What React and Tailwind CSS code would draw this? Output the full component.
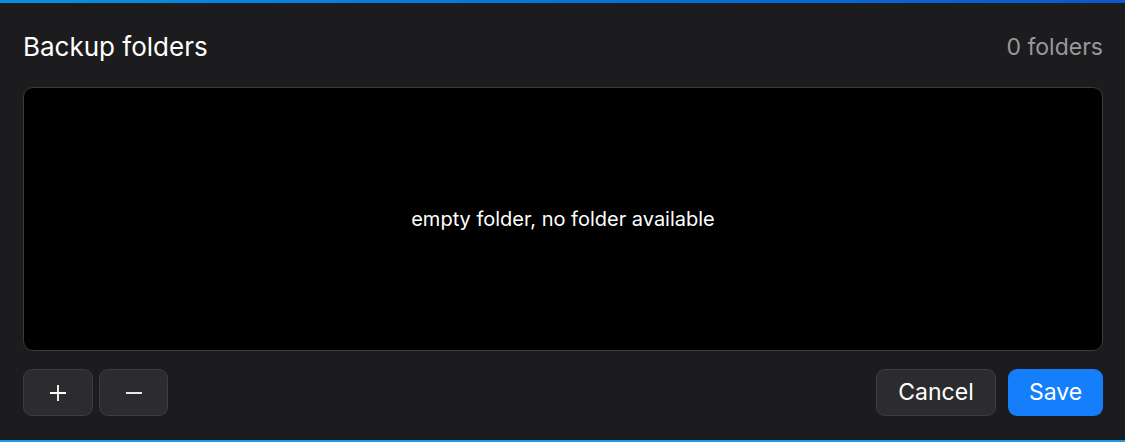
export default function App() {
  return (
    <div
      className="w-[1125px] h-[442px] bg-[#1c1c1e] flex flex-col text-white overflow-hidden"
      style={{ fontFamily: 'Inter, "Noto Sans", sans-serif' }}
    >
      <div className="h-[3px] bg-gradient-to-r from-[#0a90e2] to-[#0b58d0]" />
      <div className="flex-1 flex flex-col pl-[23px] pr-[22px] pt-[30px]">
        <div className="flex items-center justify-between h-[28px]">
          <h1 className="text-[26px] leading-[28px] font-normal">Backup folders</h1>
          <span className="text-[23px] leading-[28px] text-[#98989d]">0 folders</span>
        </div>
        <div className="mt-[26px] h-[264px] rounded-[10px] border border-[#3a3a3c] bg-black flex items-center justify-center">
          <p className="text-[20px] leading-[24px]">empty folder, no folder available</p>
        </div>
        <div className="mt-[18px] flex items-center justify-between">
          <div className="flex gap-[6px]">
            <button className="w-[70px] h-[47px] rounded-[9px] border border-[#3d3d40] bg-[#2c2c2f] flex items-center justify-center">
              <svg width="18" height="18" viewBox="0 0 18 18" fill="none" stroke="white" strokeWidth="1.8">
                <path d="M9 1v16M1 9h16" />
              </svg>
            </button>
            <button className="w-[69px] h-[47px] rounded-[9px] border border-[#3d3d40] bg-[#2c2c2f] flex items-center justify-center">
              <svg width="18" height="18" viewBox="0 0 18 18" fill="none" stroke="white" strokeWidth="1.8">
                <path d="M1 9h16" />
              </svg>
            </button>
          </div>
          <div className="flex gap-[12px]">
            <button className="w-[120px] h-[47px] rounded-[9px] border border-[#3d3d40] bg-[#2c2c2f] text-[23px] leading-none">
              Cancel
            </button>
            <button className="w-[95px] h-[47px] rounded-[9px] bg-[#147efb] text-[23px] leading-none">
              Save
            </button>
          </div>
        </div>
      </div>
      <div className="h-[2px] bg-[#1a9be6]" />
    </div>
  );
}
